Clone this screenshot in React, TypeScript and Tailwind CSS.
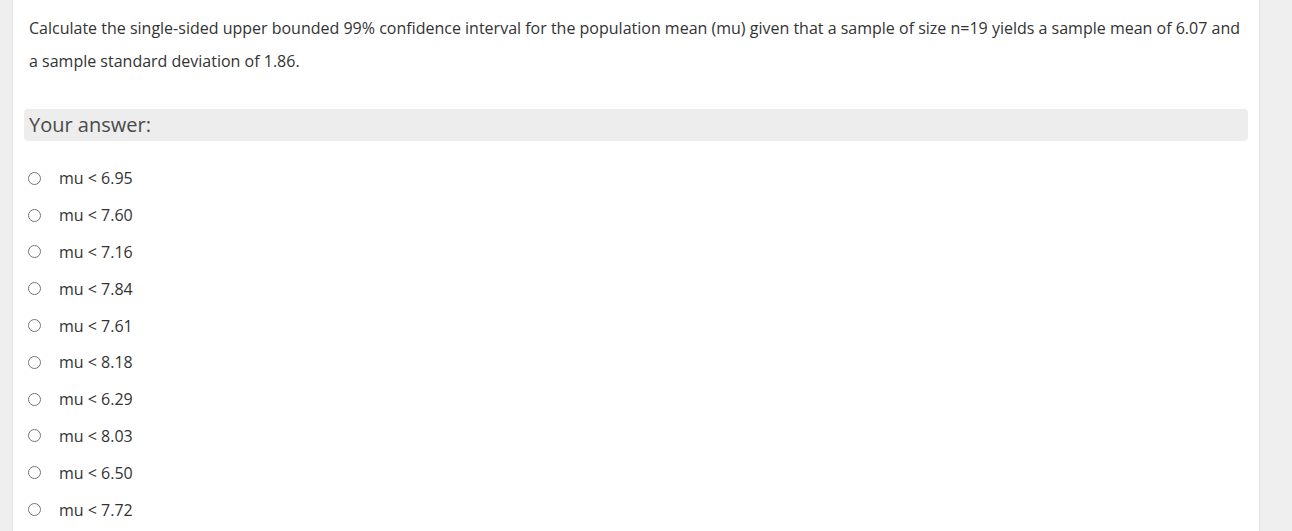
const options = ['6.95', '7.60', '7.16', '7.84', '7.61', '8.18', '6.29', '8.03', '6.50', '7.72'];

export default function App() {
  return (
    <div className="flex h-[531px] w-full overflow-hidden bg-[#efefef] font-['Open_Sans',sans-serif]">
      <div className="w-[13px] shrink-0 border-r border-[#e4e4e4]" />
      <div className="w-[1247px] shrink-0 bg-white border-r border-[#e2e2e2] pl-[11px] pr-[11px]">
        <p className="pl-[5px] pt-[12px] text-[16px] leading-[33px] text-[#333]">
          Calculate the single-sided upper bounded 99% confidence interval for the population mean (mu) given that a sample of size n=19 yields a sample mean of 6.07 and a sample standard deviation of 1.86.
        </p>
        <div className="mt-[31px] h-[32px] rounded-[4px] bg-[#ecedec] pl-[5px] text-[20px] leading-[32px] text-[#4a4a4a]">
          Your answer:
        </div>
        <div className="mt-[19px] flex flex-col">
          {options.map((v) => (
            <label key={v} className="flex h-[36.8px] items-center">
              <span className="ml-[4px] h-[13px] w-[13px] rounded-full border border-[#767676] bg-white" />
              <span className="ml-[18px] text-[16px] text-[#333]">mu &lt; {v}</span>
            </label>
          ))}
        </div>
      </div>
      <div className="flex-1" />
    </div>
  );
}
